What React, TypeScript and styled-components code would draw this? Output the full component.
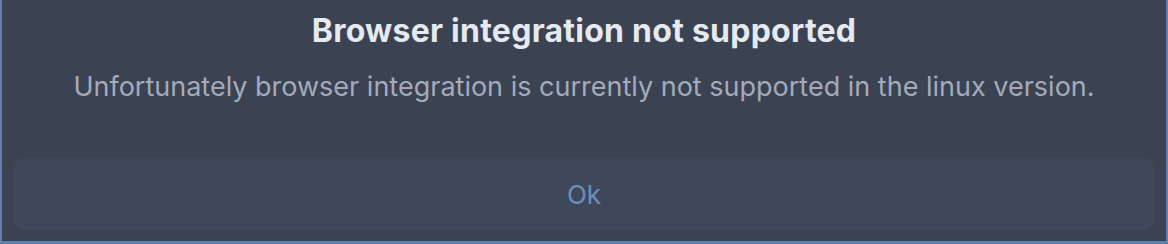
import React from "react";
import styled, { createGlobalStyle } from "styled-components";

const GlobalStyle = createGlobalStyle`
  html, body {
    margin: 0;
    padding: 0;
    background: #3b4252;
  }
  #root {
    width: 1168px;
    height: 244px;
  }
`;

const Frame = styled.div`
  box-sizing: border-box;
  width: 1168px;
  height: 244px;
  background: #3b4252;
  border: 2px solid #5e81ac;
  border-top: none;
  border-bottom-width: 3px;
  display: flex;
  flex-direction: column;
  align-items: center;
  padding: 11px 12px 11px;
  font-family: Inter, "Noto Sans", sans-serif;
`;

const Title = styled.h1`
  margin: 0;
  font-size: 32px;
  font-weight: 700;
  line-height: 40px;
  letter-spacing: 0.25px;
  color: #e5e9f0;
`;

const Message = styled.p`
  margin: 18px 0 0;
  font-size: 27px;
  font-weight: 400;
  line-height: 36px;
  color: #a3abba;
`;

const OkButton = styled.button`
  margin-top: auto;
  align-self: stretch;
  height: 72px;
  border: none;
  border-radius: 10px;
  background: #3f4859;
  color: #6a8fbf;
  font-family: inherit;
  font-size: 26px;
  cursor: pointer;
`;

export default function App() {
  return (
    <>
      <GlobalStyle />
      <Frame>
        <Title>Browser integration not supported</Title>
        <Message>
          Unfortunately browser integration is currently not supported in the linux version.
        </Message>
        <OkButton>Ok</OkButton>
      </Frame>
    </>
  );
}
